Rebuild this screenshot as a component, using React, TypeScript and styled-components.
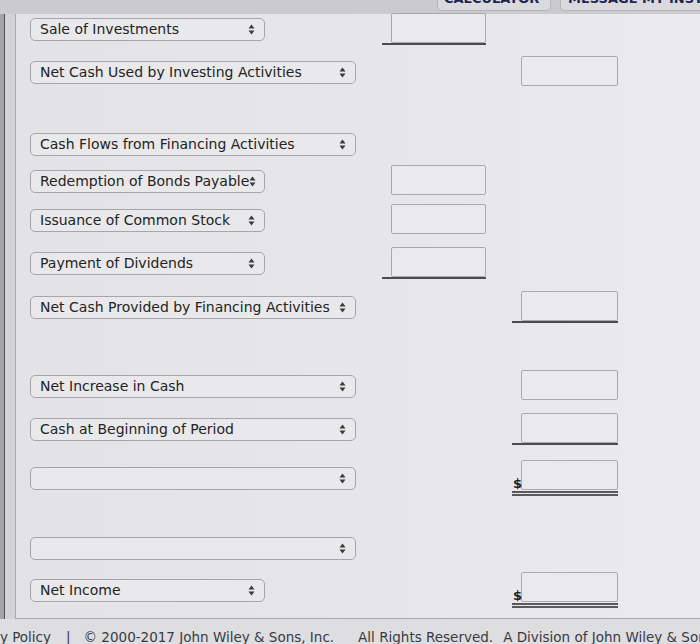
import React from "react";
import styled, { createGlobalStyle } from "styled-components";

const Global = createGlobalStyle`
  html, body { margin: 0; padding: 0; }
  body {
    width: 700px;
    height: 644px;
    overflow: hidden;
    background: #dcdcde;
    font-family: "DejaVu Sans", Verdana, sans-serif;
  }
`;

const Page = styled.div`
  width: 700px;
  height: 644px;
  display: flex;
  flex-direction: column;
  overflow: hidden;
`;

const TopBar = styled.div`
  height: 14px;
  flex: none;
  background: #cbcbcf;
  display: flex;
  justify-content: flex-end;
  gap: 9px;
  overflow: hidden;
`;

const TabButton = styled.div<{ $w: number; $bleed?: boolean }>`
  width: ${(p) => p.$w}px;
  height: 24px;
  margin-top: -13px;
  box-sizing: border-box;
  border: 1px solid #b4b4ba;
  border-radius: 4px;
  background: #dadade;
  color: #1d2553;
  font-weight: bold;
  font-size: 13px;
  line-height: 22px;
  padding-left: ${(p) => (p.$bleed ? 7 : 6)}px;
  white-space: nowrap;
  overflow: hidden;
  margin-right: ${(p) => (p.$bleed ? -12 : 0)}px;
`;

const Body = styled.div`
  display: flex;
  flex: none;
`;

const Rail = styled.div`
  width: 4px;
  background: #a4a4a8;
  border-right: 1px solid #4e4e52;
`;

const Gutter = styled.div`
  width: 10px;
  background: #d3d3d6;
  border-right: 1px solid #a9a9ad;
`;

const Panel = styled.div`
  flex: 1;
  background: linear-gradient(90deg, #e3e3e5 0%, #e7e7e9 60%, #ebebed 100%);
  padding: 0 0 13px 14px;
  border-bottom: 1px solid #a7a7aa;
`;

const Row = styled.div<{ $mt: number }>`
  display: flex;
  align-items: center;
  height: 30px;
  margin-top: ${(p) => p.$mt}px;
`;

const SelectCell = styled.div`
  width: 352px;
  flex: none;
`;

const Dropdown = styled.div<{ $long: boolean }>`
  width: ${(p) => (p.$long ? 326 : 235)}px;
  height: 23px;
  box-sizing: border-box;
  border: 1px solid #a6a6aa;
  border-radius: 5px;
  background: #e9e9eb;
  display: flex;
  align-items: center;
  justify-content: space-between;
  padding: 0 9px 0 9px;
  color: #232323;
  font-size: 14px;
  white-space: nowrap;
`;

const Arrows = styled.svg`
  flex: none;
  width: 7px;
  height: 11px;
`;

const Col1 = styled.div`
  width: 130px;
  flex: none;
  display: flex;
`;

const Col2 = styled.div`
  flex: 1;
  display: flex;
`;

const Amount = styled.div<{ $line: "none" | "single" | "double" }>`
  display: inline-flex;
  align-items: flex-end;
  padding-left: 9px;
  position: relative;
  border-bottom: ${(p) =>
    p.$line === "single"
      ? "2px solid #4c4c4e"
      : p.$line === "double"
      ? "5px double #5a5a5c"
      : "2px solid transparent"};
  padding-bottom: ${(p) => (p.$line === "double" ? 1 : 0)}px;
`;

const Dollar = styled.span`
  position: absolute;
  left: 1px;
  bottom: 0;
  font-weight: bold;
  font-size: 13px;
  line-height: 14px;
  color: #222;
`;

const Box = styled.div<{ $w: number }>`
  width: ${(p) => p.$w}px;
  height: 30px;
  box-sizing: border-box;
  border: 1px solid #a9a9ac;
  border-radius: 2px;
  background: #eaeaec;
`;

const Footer = styled.div`
  flex: 1;
  background: #dedee0;
  padding-top: 8px;
  font-size: 13.5px;
  line-height: 20px;
  color: #383a44;
  white-space: nowrap;
  overflow: hidden;
`;

const FootText = styled.div`
  margin-left: -41px;
  display: flex;
`;

const FootItem = styled.span<{ $ml?: number }>`
  margin-left: ${(p) => p.$ml ?? 0}px;
`;

type Line = "none" | "single" | "double";

interface RowSpec {
  label: string;
  long: boolean;
  mt: number;
  col?: 1 | 2;
  line?: Line;
  dollar?: boolean;
}

const rows: RowSpec[] = [
  { label: "Sale of Investments", long: false, mt: 0, col: 1, line: "single" },
  { label: "Net Cash Used by Investing Activities", long: true, mt: 13, col: 2 },
  { label: "Cash Flows from Financing Activities", long: true, mt: 42 },
  { label: "Redemption of Bonds Payable", long: false, mt: 7, col: 1 },
  { label: "Issuance of Common Stock", long: false, mt: 9, col: 1 },
  { label: "Payment of Dividends", long: false, mt: 13, col: 1, line: "single" },
  { label: "Net Cash Provided by Financing Activities", long: true, mt: 14, col: 2, line: "single" },
  { label: "Net Increase in Cash", long: true, mt: 49, col: 2 },
  { label: "Cash at Beginning of Period", long: true, mt: 13, col: 2, line: "single" },
  { label: "", long: true, mt: 19, col: 2, line: "double", dollar: true },
  { label: "", long: true, mt: 40 },
  { label: "Net Income", long: false, mt: 12, col: 2, line: "double", dollar: true },
];

const UpDown = () => (
  <Arrows viewBox="0 0 7 11">
    <path d="M3.5 0.5 L6.5 4.5 L0.5 4.5 Z" fill="#3a3a3a" />
    <path d="M3.5 10.5 L6.5 6.5 L0.5 6.5 Z" fill="#3a3a3a" />
  </Arrows>
);

const AmountField = ({ line = "none", dollar, w }: { line?: Line; dollar?: boolean; w: number }) => (
  <Amount $line={line}>
    {dollar && <Dollar>$</Dollar>}
    <Box $w={w} />
  </Amount>
);

export default function App() {
  return (
    <Page>
      <Global />
      <TopBar>
        <TabButton $w={114}>CALCULATOR</TabButton>
        <TabButton $w={152} $bleed>
          MESSAGE MY INSTRUCTOR
        </TabButton>
      </TopBar>
      <Body>
        <Rail />
        <Gutter />
        <Panel>
          {rows.map((r, i) => (
            <Row key={i} $mt={r.mt}>
              <SelectCell>
                <Dropdown $long={r.long}>
                  <span>{r.label}</span>
                  <UpDown />
                </Dropdown>
              </SelectCell>
              <Col1>{r.col === 1 && <AmountField line={r.line} w={95} />}</Col1>
              <Col2>{r.col === 2 && <AmountField line={r.line} dollar={r.dollar} w={97} />}</Col2>
            </Row>
          ))}
        </Panel>
      </Body>
      <Footer>
        <FootText>
          <FootItem>Privacy Policy</FootItem>
          <FootItem $ml={15}>|</FootItem>
          <FootItem $ml={13}>© 2000-2017 John Wiley &amp; Sons, Inc.</FootItem>
          <FootItem $ml={24}>All Rights Reserved.</FootItem>
          <FootItem $ml={10}>A Division of John Wiley &amp; Sons, Inc.</FootItem>
        </FootText>
      </Footer>
    </Page>
  );
}
